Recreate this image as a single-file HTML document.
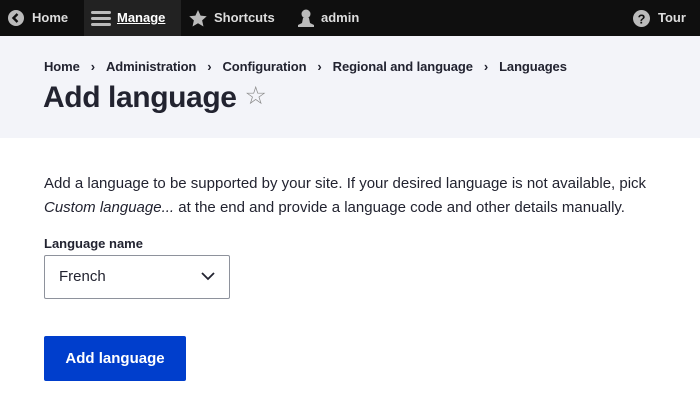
<!DOCTYPE html>
<html><head><style>
*{margin:0;padding:0;box-sizing:border-box}
body{width:700px;height:414px;background:#fff;font-family:"Liberation Sans",Arial,sans-serif;color:#222330;overflow:hidden;position:relative}
.tb{position:absolute;left:0;top:0;width:700px;height:36px;background:#0f0f0f;color:#ddd;font-weight:bold;font-size:13px}
.tb div{position:absolute;top:0;height:36px;line-height:36px;display:flex;align-items:center}
.hdr{position:absolute;top:36px;left:0;width:700px;height:102px;background:#f3f4f9}
.bc{position:absolute;top:59px;left:44px;font-size:13px;font-weight:bold;white-space:nowrap;letter-spacing:-0.1px}
.bc span{margin:0 11px}
h1{position:absolute;top:81px;left:43px;font-size:30px;font-weight:bold;letter-spacing:-0.4px}
p{position:absolute;top:172px;left:44px;font-size:15px;line-height:24px;width:640px}
.lbl{position:absolute;top:236px;left:44px;font-size:13px;font-weight:bold}
.sel{position:absolute;top:255px;left:44px;width:186px;height:44px;border:1px solid #8e929c;border-radius:2px;font-size:15px;line-height:42px;padding-left:14px}
.btn{position:absolute;top:336px;left:44px;width:142px;height:45px;background:#003ecc;border-radius:2px;color:#fff;font-weight:bold;font-size:15px;line-height:45px;text-align:center}
</style></head><body>
<div class="tb">
 <div style="left:8px"><svg width="16" height="16" viewBox="0 0 16 16"><circle cx="8" cy="8" r="8" fill="#bbb"/><path d="M9.5 4 5.5 8l4 4" stroke="#0f0f0f" stroke-width="2.4" fill="none"/></svg><span style="margin-left:8px">Home</span></div>
 <div style="left:84px;width:97px;background:#222;padding-left:7px"><svg width="20" height="16" viewBox="0 0 20 16"><rect y="1" width="20" height="3" rx="1.5" fill="#bbb"/><rect y="7" width="20" height="3" rx="1.5" fill="#bbb"/><rect y="13" width="20" height="3" rx="1.5" fill="#bbb"/></svg><span style="margin-left:6px;text-decoration:underline;color:#fff">Manage</span></div>
 <div style="left:189px"><svg width="18" height="17" viewBox="0 0 24 23"><path d="M12 0l3.5 7.6 8.3.9-6.2 5.6 1.8 8.2L12 18l-7.4 4.3 1.8-8.2L.2 8.5l8.3-.9z" fill="#bbb"/></svg><span style="margin-left:7px">Shortcuts</span></div>
 <div style="left:298px"><svg width="16" height="18" viewBox="0 0 16 18"><circle cx="8" cy="5" r="4.5" fill="#bbb"/><path d="M5 9h6l1 5 4 2v2H0v-2l4-2z" fill="#bbb"/></svg><span style="margin-left:7px">admin</span></div>
 <div style="left:633px"><svg width="17" height="17" viewBox="0 0 16 16"><circle cx="8" cy="8" r="8" fill="#bbb"/><text x="8" y="12.5" font-size="12" font-weight="bold" text-anchor="middle" fill="#0f0f0f" font-family="Liberation Sans">?</text></svg><span style="margin-left:8px">Tour</span></div>
</div>
<div class="hdr"></div>
<div class="bc">Home<span>›</span>Administration<span>›</span>Configuration<span>›</span>Regional and language<span>›</span>Languages</div>
<h1>Add language <span style="font-weight:normal;color:#888;font-size:25px;vertical-align:3px">☆</span></h1>
<p>Add a language to be supported by your site. If your desired language is not available, pick <i>Custom language...</i> at the end and provide a language code and other details manually.</p>
<div class="lbl">Language name</div>
<div class="sel">French<svg style="position:absolute;right:14px;top:16px" width="14" height="9" viewBox="0 0 14 9"><path d="M1 1l6 6 6-6" stroke="#222330" stroke-width="1.8" fill="none"/></svg></div>
<div class="btn">Add language</div>
</body></html>
